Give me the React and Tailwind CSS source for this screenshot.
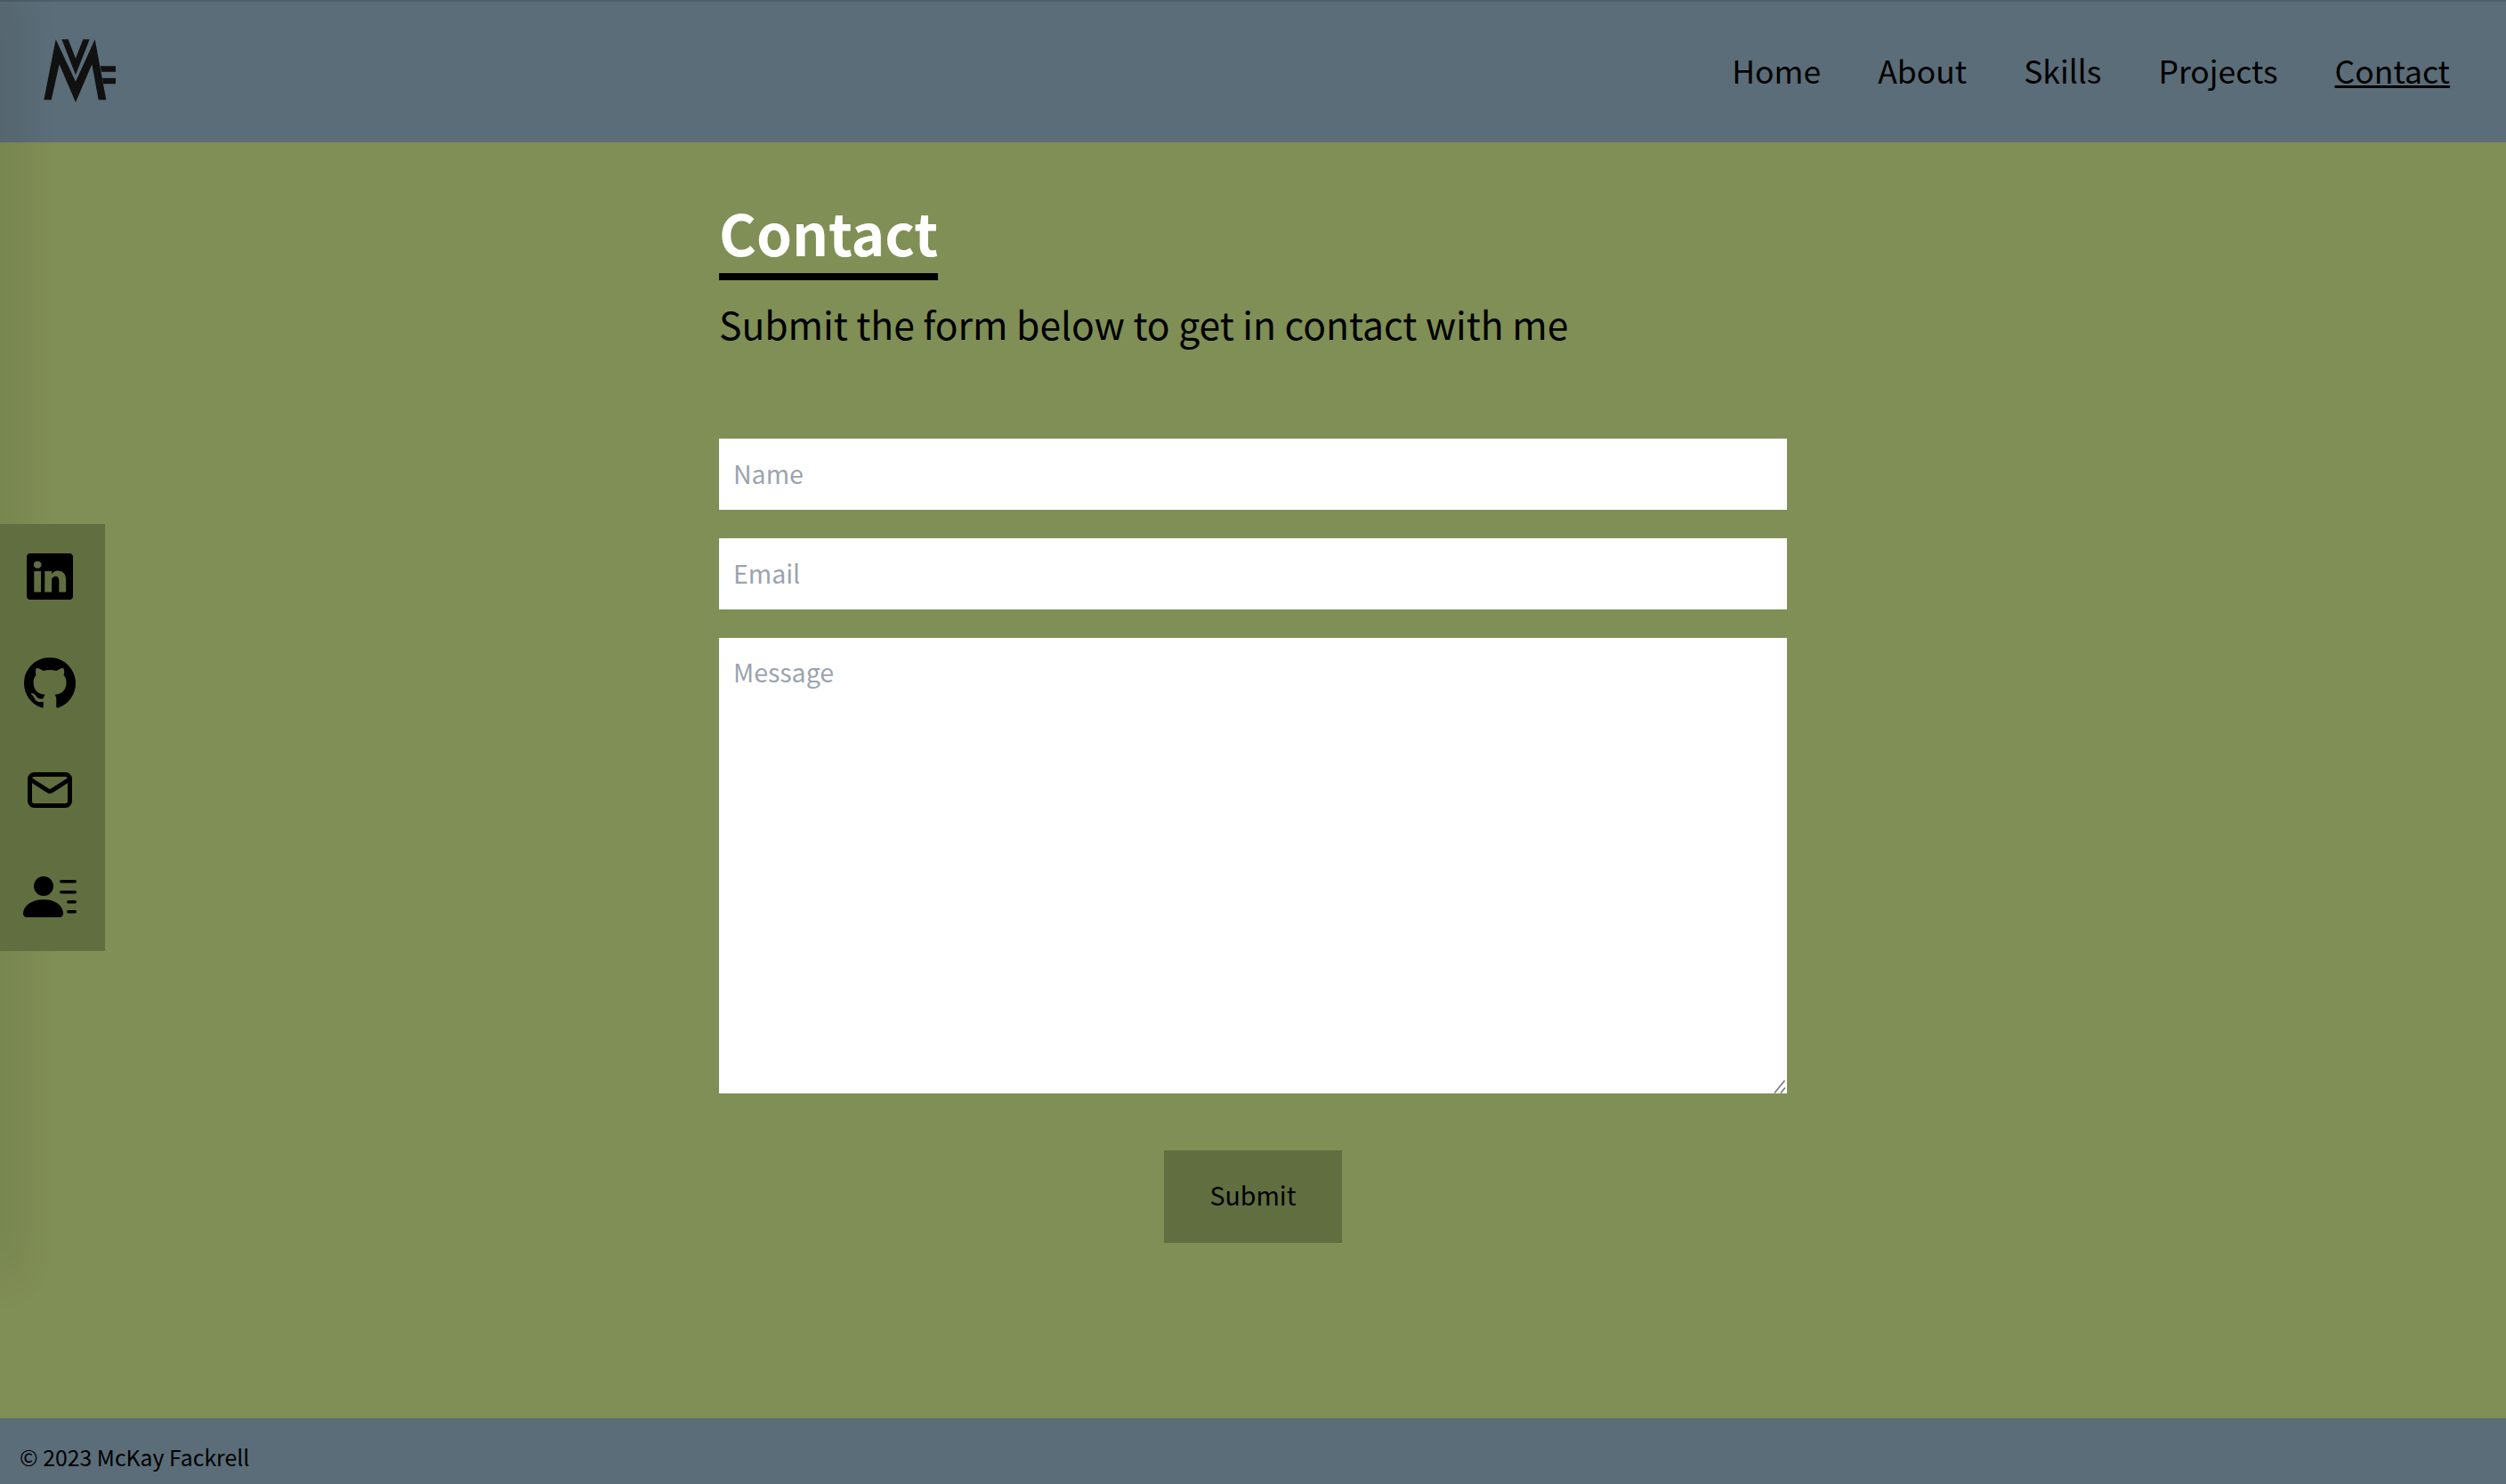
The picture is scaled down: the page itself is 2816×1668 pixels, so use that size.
const Logo = () => (
  <svg width="100" height="90" viewBox="0 0 300 270" fill="#111111" className="-mt-[2px]">
    <polygon points="28,232 68,28 135,170 200,28 238,232 212,232 190,112 135,240 80,112 53,232" />
    <polygon points="88,28 110,28 135,92 160,28 182,28 135,148" />
    <polygon points="218,118 270,118 270,137 222,137" />
    <polygon points="225,158 270,158 270,178 228,178" />
  </svg>
);

const LinkedIn = () => (
  <svg width="52" height="52" viewBox="0 0 16 16" fill="currentColor">
    <path d="M0 1.146C0 .513.526 0 1.175 0h13.65C15.474 0 16 .513 16 1.146v13.708c0 .633-.526 1.146-1.175 1.146H1.175C.526 16 0 15.487 0 14.854V1.146zm4.943 12.248V6.169H2.542v7.225h2.401zm-1.2-8.212c.837 0 1.358-.554 1.358-1.248-.015-.709-.52-1.248-1.342-1.248-.822 0-1.359.54-1.359 1.248 0 .694.521 1.248 1.327 1.248h.016zm4.908 8.212V9.359c0-.216.016-.432.08-.586.173-.431.568-.878 1.232-.878.869 0 1.216.662 1.216 1.634v3.865h2.401V9.25c0-2.22-1.184-3.252-2.764-3.252-1.274 0-1.845.7-2.165 1.193v.025h-.016a5.54 5.54 0 0 1 .016-.025V6.169h-2.4c.03.678 0 7.225 0 7.225h2.4z" />
  </svg>
);

const Github = () => (
  <svg width="58" height="58" viewBox="0 0 16 16" fill="currentColor">
    <path d="M8 0C3.58 0 0 3.58 0 8c0 3.54 2.29 6.53 5.47 7.59.4.07.55-.17.55-.38 0-.19-.01-.82-.01-1.49-2.01.37-2.53-.49-2.69-.94-.09-.23-.48-.94-.82-1.13-.28-.15-.68-.52-.01-.53.63-.01 1.08.58 1.23.82.72 1.21 1.87.87 2.33.66.07-.52.28-.87.51-1.07-1.78-.2-3.64-.89-3.64-3.95 0-.87.31-1.59.82-2.15-.08-.2-.36-1.02.08-2.12 0 0 .67-.21 2.2.82.64-.18 1.32-.27 2-.27.68 0 1.36.09 2 .27 1.53-1.04 2.2-.82 2.2-.82.44 1.1.16 1.92.08 2.12.51.56.82 1.27.82 2.15 0 3.07-1.87 3.75-3.65 3.95.29.25.54.73.54 1.48 0 1.07-.01 1.93-.01 2.2 0 .21.15.46.55.38A8.012 8.012 0 0 0 16 8c0-4.42-3.58-8-8-8z" />
  </svg>
);

const Mail = () => (
  <svg width="50" height="40" viewBox="0 0 50 40" fill="none" stroke="currentColor" strokeWidth="5" strokeLinecap="round" strokeLinejoin="round">
    <rect x="2.5" y="2.5" width="45" height="35" rx="5" />
    <path d="M3 8l19.5 12.500a4.500 4.500 0 0 0 5 0L47 8" />
  </svg>
);

const Resume = () => (
  <svg width="60" height="46" viewBox="0 0 60 46" fill="currentColor">
    <circle cx="23" cy="11" r="11" />
    <path d="M0 42c0-9 10-16 23-16s22 7 22 16c0 2-1.500 4-4 4H4c-2.500 0-4-2-4-4z" />
    <rect x="41" y="4" width="19" height="3.500" rx="1.750" />
    <rect x="41" y="16" width="19" height="3.500" rx="1.750" />
    <rect x="49" y="27" width="11" height="3.500" rx="1.750" />
    <rect x="49" y="38" width="11" height="3.500" rx="1.750" />
  </svg>
);

const links = ["Home", "About", "Skills", "Projects", "Contact"];

const App = () => {
  return (
    <div className="relative flex flex-col min-h-[1668px] bg-[#808f55] text-black font-['Noto_Sans_CJK_SC',sans-serif]">
      <header className="flex h-[160px] items-center justify-between pl-[40px] pr-[63px] bg-[#5b6d78] border-t-2 border-[#4c5f6c]">
        <Logo />
        <nav className="flex gap-[64px] text-[35.5px] leading-[60px] -mt-[4px]">
          {links.map((l) => (
            <a key={l} className={l === "Contact" ? "underline" : ""}>
              {l}
            </a>
          ))}
        </nav>
      </header>

      <main className="flex-1 h-[1434px]">
        <div className="w-[1200px] mx-auto pt-[64px]">
          <h1 className="w-fit text-[64px] leading-[73px] pb-[10px] font-bold text-white border-b-[8px] border-black">
            Contact
          </h1>
          <p className="mt-[13px] text-[42.6px] leading-[72px]">
            Submit the form below to get in contact with me
          </p>
          <form className="mt-[93px] flex flex-col">
            <input
              placeholder="Name"
              className="h-[80px] bg-white px-4 pb-[3px] text-[28.5px] placeholder:text-[#9ca3af] outline-none"
            />
            <input
              placeholder="Email"
              className="mt-8 h-[80px] bg-white px-4 pb-[3px] text-[28.5px] placeholder:text-[#9ca3af] outline-none"
            />
            <div className="relative mt-8 h-[512px]">
              <textarea
                placeholder="Message"
                className="block w-full h-full resize-none bg-white px-4 pt-[14px] text-[28.5px] leading-[48px] placeholder:text-[#9ca3af] outline-none"
              />
              <svg width="14" height="15" viewBox="0 0 14 15" className="absolute right-[1px] bottom-0" stroke="#767676" strokeWidth="1.6">
                <path d="M1 14.500L12.500 0.500M8 14.500L13 8.500" />
              </svg>
            </div>
            <button className="mt-16 mx-auto w-[200px] h-[104px] pb-[3px] bg-[#616e40] text-[28.5px]">
              Submit
            </button>
          </form>
        </div>
      </main>

      <footer className="h-[74px] bg-[#5b6d78] pl-[22px] pt-[22px] text-[24.8px] leading-[42px]">
        © 2023 McKay Fackrell
      </footer>

      {/* soft shadow down the left edge */}
      <div className="absolute left-0 top-0 w-0 h-[1420px] shadow-[0_0_50px_12px_rgba(0,0,0,0.16)] pointer-events-none" />

      <aside className="absolute left-0 top-[589px] w-[118px] h-[480px] bg-[#616e40] flex flex-col">
        <a className="h-[120px] flex items-center justify-center pr-[6px] pb-[2px]"><LinkedIn /></a>
        <a className="h-[120px] flex items-center justify-center pr-[6px] pb-[2px]"><Github /></a>
        <a className="h-[120px] flex items-center justify-center pr-[6px] pb-[2px]"><Mail /></a>
        <a className="h-[120px] flex items-center justify-center pr-[6px] pb-[2px]"><Resume /></a>
      </aside>
    </div>
  );
};

export default App;
